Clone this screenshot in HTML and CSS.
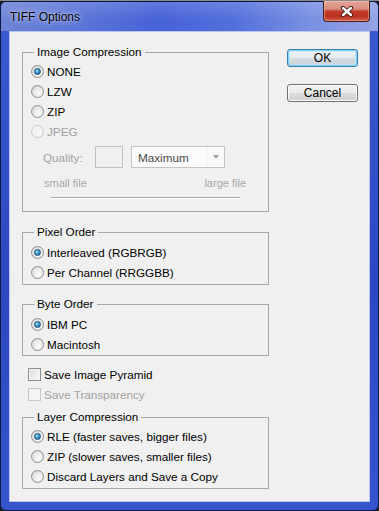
FILE: index.html
```html
<!DOCTYPE html>
<html>
<head>
<meta charset="utf-8">
<link rel="stylesheet" href="styles.css">
</head>
<body>
<div class="window">
  <div class="titlebar">
    <span class="title">TIFF Options</span>
    <div class="close">
      <svg width="14" height="11" viewBox="0 0 14 11">
        <path d="M3 2 L11 9 M11 2 L3 9" stroke="#3a1414" stroke-width="4.2" stroke-linecap="round" fill="none"/>
        <path d="M3 2 L11 9 M11 2 L3 9" stroke="#ffffff" stroke-width="2.4" stroke-linecap="round" fill="none"/>
      </svg>
    </div>
  </div>
  <div class="client">
    <div class="left">
      <fieldset class="group g-comp">
        <legend>Image Compression</legend>
        <div class="opt"><span class="radio on"></span>NONE</div>
        <div class="opt"><span class="radio"></span>LZW</div>
        <div class="opt"><span class="radio"></span>ZIP</div>
        <div class="opt disabled"><span class="radio"></span>JPEG</div>
        <div class="quality">
          <span class="q-label">Quality:</span>
          <span class="q-box"></span>
          <span class="q-select"><span class="q-value">Maximum</span><span class="q-arrow"></span></span>
        </div>
        <div class="scale"><span>small file</span><span>large file</span></div>
        <div class="slider"></div>
      </fieldset>
      <fieldset class="group g-pixel">
        <legend>Pixel Order</legend>
        <div class="opt"><span class="radio on"></span>Interleaved (RGBRGB)</div>
        <div class="opt"><span class="radio"></span>Per Channel (RRGGBB)</div>
      </fieldset>
      <fieldset class="group g-byte">
        <legend>Byte Order</legend>
        <div class="opt"><span class="radio on"></span>IBM PC</div>
        <div class="opt"><span class="radio"></span>Macintosh</div>
      </fieldset>
      <div class="checks">
        <div class="opt chk"><span class="checkbox"></span>Save Image Pyramid</div>
        <div class="opt chk disabled"><span class="checkbox"></span>Save Transparency</div>
      </div>
      <fieldset class="group g-layer">
        <legend>Layer Compression</legend>
        <div class="opt"><span class="radio on"></span>RLE (faster saves, bigger files)</div>
        <div class="opt"><span class="radio"></span>ZIP (slower saves, smaller files)</div>
        <div class="opt"><span class="radio"></span>Discard Layers and Save a Copy</div>
      </fieldset>
    </div>
    <div class="buttons">
      <button class="btn default">OK</button>
      <button class="btn">Cancel</button>
    </div>
  </div>
</div>
</body>
</html>
```
FILE: styles.css
```css
html, body {
  margin: 0;
  padding: 0;
}
body {
  background: linear-gradient(to bottom, #8a8a8a 0, #8a8a8a 1px, #1c1c1c 1px);
  font-family: "Liberation Sans", Arial, sans-serif;
  font-size: 11.7px;
  color: #000;
  width: 379px;
  height: 511px;
  overflow: hidden;
}
.window {
  margin-top: 1px;
  width: 379px;
  height: 510px;
  box-sizing: border-box;
  border: 1px solid #0c1848;
  border-radius: 6px;
  background: linear-gradient(to bottom, #3d5bd0 0%, #2b48c0 55%, #3654cc 100%);
  padding: 0 8px 8px;
  display: flex;
  flex-direction: column;
}
.titlebar {
  height: 29px;
  margin: 0 -8px;
  padding: 0 8px;
  display: flex;
  justify-content: space-between;
  align-items: flex-start;
  border-radius: 5px 5px 0 0;
  background:
    linear-gradient(to bottom, rgba(255,255,255,0.14), rgba(255,255,255,0) 60%),
    linear-gradient(to right, #6e84d6 0%, #5a74d8 22%, #4862d8 42%, #5470dc 62%, #7a90e2 82%, #93a4e6 100%);
}
.title {
  margin: 8px 0 0 1px;
  line-height: 14px;
  font-size: 12px;
  color: #000;
  text-shadow: 0 0 6px rgba(255,255,255,0.75), 0 0 2px rgba(255,255,255,0.5);
}
.close {
  width: 45px;
  height: 20px;
  margin-top: -1px;
  border: 1px solid #4a1a16;
  border-top: none;
  border-radius: 0 0 4px 4px;
  background: linear-gradient(to bottom, #e3a79b 0%, #d98a7c 40%, #c23a28 52%, #b8301e 75%, #d0604a 100%);
  box-shadow: inset 0 0 0 1px rgba(255,200,190,0.45);
  display: flex;
  align-items: center;
  justify-content: center;
}
.close svg {
  display: block;
}
.client {
  flex: 1;
  background: #f0f0f0;
  border: 1px solid #b8c6ee;
  display: flex;
  align-items: flex-start;
  padding: 13px 0 0 12px;
}
.left {
  width: 247px;
  display: flex;
  flex-direction: column;
}
.group {
  margin: 0;
  padding: 0 7px 2px;
  border: 1px solid #a8a8a8;
  min-width: 0;
}
.group legend {
  margin-left: 4px;
  padding: 0 3px;
  line-height: 14px;
  height: 14px;
}
.g-comp { padding-top: 2px; }
.g-pixel { margin-top: 13px; padding-top: 3px; }
.g-byte { margin-top: 12px; padding-top: 3px; padding-bottom: 1px; }
.g-layer { margin-top: 6px; padding-top: 2px; }
.opt {
  display: flex;
  align-items: center;
  height: 20px;
  gap: 3px;
  white-space: nowrap;
}
.opt.disabled {
  color: #a2a2a2;
}
.radio {
  width: 11px;
  height: 11px;
  margin-left: 1px;
  border-radius: 50%;
  border: 1px solid #8e8f8f;
  background: radial-gradient(circle at 65% 65%, #fbfbfb 0%, #eaeaea 45%, #d0d0d0 100%);
  display: inline-flex;
  align-items: center;
  justify-content: center;
  flex: none;
}
.radio.on::after {
  content: "";
  width: 5px;
  height: 5px;
  border-radius: 50%;
  border: 1px solid #1b4e76;
  background: radial-gradient(circle at 40% 35%, #a8e0fa 0%, #3e9ad2 45%, #0e4a78 100%);
}
.opt.disabled .radio {
  border-color: #c8c8c8;
  background: #f4f4f4;
}
.quality {
  display: flex;
  align-items: center;
  height: 22px;
  margin-top: 5px;
  color: #a2a2a2;
}
.q-label {
  width: 52px;
  margin-left: 13px;
}
.q-box {
  width: 26px;
  height: 20px;
  border: 1px solid #c0c0c0;
  background: #f0f0f0;
}
.q-select {
  margin-left: 8px;
  width: 92px;
  height: 20px;
  border: 1px solid #c4c4c4;
  background: #fbfbfb;
  display: flex;
  align-items: center;
}
.q-value {
  flex: 1;
  padding-left: 6px;
  color: #4a4a4a;
}
.q-arrow {
  width: 17px;
  height: 20px;
  border-left: 1px solid #f2f2f2;
  background: #f8f8f8;
  display: flex;
  align-items: center;
  justify-content: center;
}
.q-arrow::after {
  content: "";
  border-left: 3.5px solid transparent;
  border-right: 3.5px solid transparent;
  border-top: 4px solid #a0a0a0;
}
.scale {
  display: flex;
  justify-content: space-between;
  height: 14px;
  line-height: 14px;
  margin-top: 8px;
  padding: 0 15px 0 14px;
  font-size: 11px;
  color: #a8a8a8;
}
.slider {
  margin: 7px 21px 10px 21px;
  height: 1px;
  background: #a6a6a6;
  border-bottom: 1px solid #ffffff;
}
.checks {
  margin-top: 8px;
  padding-left: 6px;
}
.opt.chk {
  gap: 3px;
}
.checkbox {
  width: 11px;
  height: 11px;
  border: 1px solid #8e8f8f;
  background: linear-gradient(135deg, #d6d6d6 0%, #ececec 50%, #fafafa 100%);
  box-shadow: inset 0 0 0 1px #f4f4f4;
  flex: none;
}
.opt.disabled .checkbox {
  border-color: #c8c8c8;
  background: #f4f4f4;
  box-shadow: none;
}
.buttons {
  margin-left: 18px;
  padding-top: 4px;
  display: flex;
  flex-direction: column;
  gap: 17px;
}
.btn {
  width: 71px;
  height: 18px;
  padding: 0;
  margin: 0;
  font-family: inherit;
  font-size: 12px;
  line-height: 16px;
  color: #000;
  border: 1px solid #707070;
  border-radius: 3px;
  background: linear-gradient(to bottom, #f2f2f2 0%, #ebebeb 48%, #dddddd 52%, #cfcfcf 100%);
  box-shadow: inset 0 0 0 1px #fbfbfb;
}
.btn.default {
  border-color: #3c7fb1;
  background: linear-gradient(to bottom, #eef3f6 0%, #e6ebee 48%, #d6dde2 52%, #c8d2d8 100%);
  box-shadow: inset 0 0 0 1px #7fd2f6, inset 0 0 0 2px rgba(180,230,250,0.6);
}
```
